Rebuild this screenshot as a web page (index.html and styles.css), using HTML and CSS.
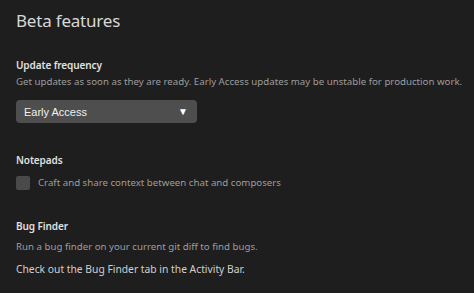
FILE: index.html
```html
<!DOCTYPE html>
<html lang="en">
<head>
    <meta charset="UTF-8">
    <meta name="viewport" content="width=device-width, initial-scale=1.0">
    <title>Beta features</title>
    <link rel="stylesheet" href="styles.css">
</head>
<body>

<div class="page">
    <h1 class="title">Beta features</h1>

    <!-- Update frequency -->
    <div class="section">
        <div class="label">Update frequency</div>
        <div class="desc">Get updates as soon as they are ready. Early Access updates may be unstable for production work.</div>
        <div class="select">
            <span>Early Access</span>
            <span class="arrow">&#9660;</span>
        </div>
    </div>

    <!-- Notepads -->
    <div class="section">
        <div class="label">Notepads</div>
        <label class="check-row">
            <span class="checkbox"></span>
            <span class="desc">Craft and share context between chat and composers</span>
        </label>
    </div>

    <!-- Bug Finder -->
    <div class="section">
        <div class="label">Bug Finder</div>
        <div class="desc spaced">Run a bug finder on your current git diff to find bugs.</div>
        <div class="note">Check out the Bug Finder tab in the Activity Bar.</div>
    </div>
</div>

</body>
</html>
```

FILE: styles.css
```css
body {
    background-color: #1e1e1e;
    font-family: "Noto Sans", "Open Sans", sans-serif;
    color: #cccccc;
    margin: 0;
}
.page {
    padding: 9px 16px 0 16px;
}
.title {
    font-size: 17px;
    line-height: 24px;
    font-weight: normal;
    letter-spacing: -0.2px;
    color: #d8d8d8;
    margin: 0 0 24px 0;
}
.section {
    margin-bottom: 29px;
}
.section:nth-child(3) {
    margin-bottom: 28px;
}
.section:last-child {
    margin-bottom: 0;
}
.label {
    font-size: 10px;
    line-height: 16px;
    font-weight: 600;
    letter-spacing: -0.1px;
    color: #e0e0e0;
    margin-bottom: 2px;
}
.desc {
    font-size: 9.7px;
    line-height: 14px;
    white-space: nowrap;
    color: #9d9d9d;
}
.spaced {
    margin-top: 6px;
}
.select {
    box-sizing: border-box;
    display: flex;
    justify-content: space-between;
    align-items: center;
    width: 181px;
    height: 23px;
    margin-top: 11px;
    padding: 0 9px 0 8px;
    background-color: #4e4e4e;
    border-radius: 4px;
    font-family: "Liberation Sans", Arial, sans-serif;
    font-size: 11px;
    color: #f0f0f0;
}
.arrow {
    font-size: 10px;
    color: #ffffff;
}
.check-row {
    display: flex;
    align-items: center;
    gap: 8px;
    margin-top: 8px;
}
.checkbox {
    width: 14px;
    height: 14px;
    background-color: #4a4a4a;
    border-radius: 2px;
}
.note {
    font-size: 10.3px;
    line-height: 16px;
    color: #d0d0d0;
    margin-top: 7px;
}
```
